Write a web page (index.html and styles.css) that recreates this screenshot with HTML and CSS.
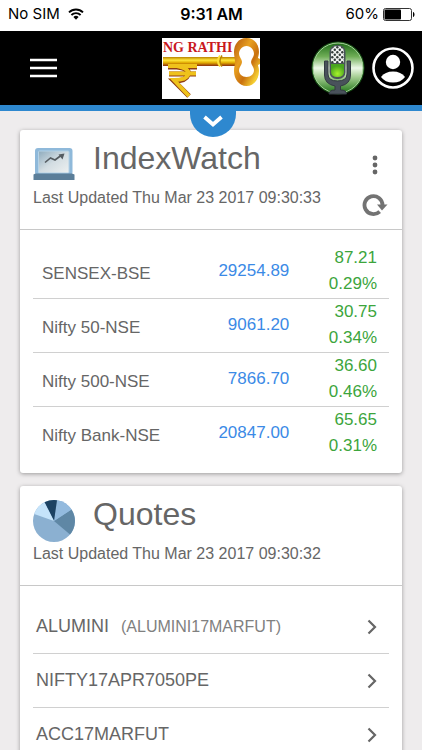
FILE: index.html
```html
<!DOCTYPE html>
<html lang="en">

<head>
  <meta charset="UTF-8" />
  <meta name="viewport" content="width=device-width, initial-scale=1.0" />
  <title>NG Rathi</title>
  <link rel="stylesheet" href="styles.css">
</head>

<body>
  <div class="status-bar">
    <div class="carrier">
      No SIM
      <svg width="16" height="12" viewBox="0 0 16 12">
        <path d="M1 4.4a10 10 0 0 1 14 0M3.4 7a6.6 6.6 0 0 1 9.2 0" fill="none" stroke="#000" stroke-width="1.9" />
        <path d="M5.4 9a3.8 3.8 0 0 1 5.2 0L8 11.8z" />
      </svg>
    </div>
    <div class="clock">9:31 AM</div>
    <div class="battery">
      60%
      <svg width="32" height="13" viewBox="0 0 32 13">
        <rect x=".5" y=".5" width="28" height="12" rx="2" fill="#fff" stroke="#333" />
        <rect x="1.5" y="1.5" width="16.5" height="10" rx="1" />
        <path d="M30 4c2 .6 2 4.400 0 5z" />
      </svg>
    </div>
  </div>

  <header class="header">
    <button class="icon-btn menu-btn" aria-label="Menu">
      <svg width="27" height="20" viewBox="0 0 27 20">
        <path d="M0 2h27M0 10h27M0 18h27" stroke="#fff" stroke-width="2.600" />
      </svg>
    </button>

    <a href="#" class="logo" aria-label="Home">
      <svg width="98" height="61" viewBox="0 0 98 61">
        <defs>
          <linearGradient id="bar" x1="0" y1="0" x2="0" y2="1">
            <stop offset="0" stop-color="#b98300" />
            <stop offset=".35" stop-color="#ffe83a" />
            <stop offset=".65" stop-color="#e0a800" />
            <stop offset="1" stop-color="#8a2b10" />
          </linearGradient>
          <linearGradient id="bow" x1="0" y1="0" x2="1" y2="1">
            <stop offset="0" stop-color="#b4570c" />
            <stop offset=".35" stop-color="#e8a020" />
            <stop offset=".6" stop-color="#c9700e" />
            <stop offset=".85" stop-color="#f7d233" />
            <stop offset="1" stop-color="#a04a10" />
          </linearGradient>
        </defs>
        <rect width="98" height="61" fill="#fff" />
        <path d="M1 19h75v9H1z" fill="url(#bar)" />
        <path d="M60 17.500q-4 5.500 0 11" fill="none" stroke="#b98300" stroke-width="1.500" />
        <path d="M58 17.500q-4 5.500 0 11" fill="none" stroke="#ffe23a" stroke-width="2" />
        <path fill="url(#bow)" fill-rule="evenodd" d="M84.500 0C93 0 97 7 97 14c0 3-1 5-1 6l2 1v5l-2 1c0 1 1 3 1 6 0 8-5 15-12.500 15S72 41 72 33c0-4 1-6 1-9s-1-6-1-10C72 7 76 0 84.500 0zm0 8c-4.500 0-7.500 4-7.500 8 0 3 3 5 3 8s-3 5-3 8c0 4 3 7 7.500 7s7.500-3 7.500-7c0-3-3-5-3-8s3-5 3-8c0-4-3-8-7.500-8z" />
        <path d="M6 29h29M7 36h27M15 29q14 2 11 8-2 6-14 6l15 15" fill="none" stroke="#8f3d14" stroke-width="5" />
        <path d="M6 28h29M7 35.500h27M15 28q14 3 11 9-2 5-14 5l15 16" fill="none" stroke="#efc21b" stroke-width="4" />
        <text x="1" y="14" class="logo-text">NG RATHI</text>
      </svg>
    </a>

    <div class="header-actions">
      <button class="icon-btn" aria-label="Voice search">
        <svg width="54" height="54" viewBox="0 0 54 54">
          <defs>
            <linearGradient id="green" x1="0" y1="0" x2="0" y2="1">
              <stop offset="0" stop-color="#1e6b18" />
              <stop offset=".27" stop-color="#6fae57" />
              <stop offset=".5" stop-color="#edf8e8" />
              <stop offset=".68" stop-color="#a5ce92" />
              <stop offset="1" stop-color="#207617" />
            </linearGradient>
            <radialGradient id="glow" cx=".5" cy=".75" r=".6">
              <stop offset="0" stop-color="#a7f32b" />
              <stop offset="1" stop-color="#4aa51f" />
            </radialGradient>
            <pattern id="mesh" width="5" height="5" patternUnits="userSpaceOnUse">
              <rect width="5" height="5" fill="#f1f3f1" />
              <circle cx="1.300" cy="1.300" r="1.200" fill="#333c3a" />
              <circle cx="3.800" cy="3.800" r="1.200" fill="#333c3a" />
            </pattern>
          </defs>
          <circle cx="27" cy="27" r="26.500" fill="#174f14" />
          <circle cx="27" cy="27" r="25" fill="url(#green)" stroke="#a7d39b" />
          <path d="M13.500 20h3.500v13q0 7 9.500 7t9.500-7V20h3.500v14q0 9-10 11v4q6 0 6 4H18q0-4 6-4v-4q-10.500-2-10.500-11z" fill="#49525b" stroke="#343b42" />
          <rect x="18.500" y="4" width="16" height="34" rx="7" fill="#4b555a" />
          <path d="M20 22V11q0-6 6.500-6t6.500 6v11z" fill="url(#mesh)" />
          <path d="M20 23h13v8q0 5-6.500 5t-6.500-5z" fill="url(#glow)" />
        </svg>
      </button>
      <button class="icon-btn" aria-label="Account">
        <svg width="42" height="42" viewBox="0 0 42 42">
          <circle cx="21" cy="21" r="19.500" fill="none" stroke="#fff" stroke-width="2.600" />
          <circle cx="21" cy="15" r="7.200" fill="#fff" />
          <path d="M9 30q4-5.500 12-5.500T33 30q-4 5.500-12 5.500T9 30z" fill="#fff" />
        </svg>
      </button>
    </div>

    <button class="pull-tab" aria-label="Show more">
      <svg width="20" height="13" viewBox="0 0 20 13">
        <path d="M1.500 2l8.500 7.500L18.500 2" fill="none" stroke="#fff" stroke-width="3.800" />
      </svg>
    </button>
  </header>

  <main class="container">
    <section class="card">
      <div class="card-header">
        <svg class="card-icon" width="42" height="34" viewBox="0 0 42 34">
          <defs>
            <linearGradient id="screen" x1="0" y1="0" x2="1" y2="1">
              <stop offset="0" stop-color="#8eabbd" />
              <stop offset=".5" stop-color="#d3dde2" />
              <stop offset="1" stop-color="#eef1f1" />
            </linearGradient>
          </defs>
          <rect x="2" y="1" width="37.500" height="27" rx="3" fill="#8fb9da" />
          <rect x="5.500" y="4" width="30.500" height="22" rx="1" fill="url(#screen)" stroke="#b5d3e7" />
          <path d="M2.500 26.500h36.500l2.500 1v5.500H.5v-5.500z" fill="#5b7e99" />
          <path d="M12 15.500l5.500-4.500 4.500 2 6-4.500" fill="none" stroke="#555c61" stroke-width="1.600" />
          <path d="M25.500 7.500l6-1-2 6z" fill="#555c61" />
        </svg>
        <h2>IndexWatch</h2>
        <p>Last Updated Thu Mar 23 2017 09:30:33</p>
        <div class="card-actions">
          <button class="icon-btn" aria-label="Options">
            <svg width="6" height="20" viewBox="0 0 6 20" fill="#666">
              <circle cx="3" cy="3" r="2.400" />
              <circle cx="3" cy="10" r="2.400" />
              <circle cx="3" cy="17" r="2.400" />
            </svg>
          </button>
          <button class="icon-btn" aria-label="Refresh">
            <svg width="26" height="24" viewBox="0 0 26 24">
              <path d="M17.700 18.600A9 9 0 1 1 20.500 12" fill="none" stroke="#737373" stroke-width="3.800" />
              <path d="M15 11.500h10.500L20 17.500z" fill="#737373" />
            </svg>
          </button>
        </div>
      </div>

      <table class="index-table">
        <tbody>
          <tr>
            <th scope="row">SENSEX-BSE</th>
            <td class="price">29254.89</td>
            <td class="change">87.21<br>0.29%</td>
          </tr>
          <tr>
            <th scope="row">Nifty 50-NSE</th>
            <td class="price">9061.20</td>
            <td class="change">30.75<br>0.34%</td>
          </tr>
          <tr>
            <th scope="row">Nifty 500-NSE</th>
            <td class="price">7866.70</td>
            <td class="change">36.60<br>0.46%</td>
          </tr>
          <tr>
            <th scope="row">Nifty Bank-NSE</th>
            <td class="price">20847.00</td>
            <td class="change">65.65<br>0.31%</td>
          </tr>
        </tbody>
      </table>
    </section>

    <section class="card">
      <div class="card-header">
        <svg class="card-icon" width="42" height="44" viewBox="0 0 42 44">
          <circle cx="21" cy="23" r="21" fill="#8bb0d1" />
          <path d="M21 23L38.500 11.500A21 21 0 0 1 37 36.500z" fill="#5f87a5" />
          <path d="M21 23L24 2.200A21 21 0 0 1 38.500 11.500z" fill="#93bade" />
          <path d="M21 23L11.500 4.300A21 21 0 0 1 24 2.200z" fill="#1c4263" />
          <path d="M21 23L1.200 16A21 21 0 0 1 11.500 4.300z" fill="#c5e3fa" />
        </svg>
        <h2>Quotes</h2>
        <p>Last Updated Thu Mar 23 2017 09:30:32</p>
      </div>

      <ul class="quote-list">
        <li>
          <a href="#">
            <span>ALUMINI</span>
            <small>(ALUMINI17MARFUT)</small>
            <svg class="chevron" width="10" height="16" viewBox="0 0 10 16">
              <path d="M1.500 1.500L8 8l-6.500 6.500" />
            </svg>
          </a>
        </li>
        <li>
          <a href="#">
            <span>NIFTY17APR7050PE</span>
            <svg class="chevron" width="10" height="16" viewBox="0 0 10 16">
              <path d="M1.500 1.500L8 8l-6.500 6.500" />
            </svg>
          </a>
        </li>
        <li>
          <a href="#">
            <span>ACC17MARFUT</span>
            <svg class="chevron" width="10" height="16" viewBox="0 0 10 16">
              <path d="M1.500 1.500L8 8l-6.500 6.500" />
            </svg>
          </a>
        </li>
      </ul>
    </section>
  </main>
</body>

</html>
```

FILE: styles.css
```css
* {
  box-sizing: border-box;
}

body {
  font-family: "Liberation Sans", Arial, sans-serif;
  margin: 0;
  height: 100vh;
  display: flex;
  flex-direction: column;
  overflow: hidden;
  background-color: #eeeced;
  color: #666;
}

svg {
  display: block;
}

/* phone status bar */
.status-bar {
  display: grid;
  grid-template-columns: 1fr auto 1fr;
  align-items: center;
  align-content: start;
  height: 31px;
  padding: 0 7px 0 8px;
  flex-shrink: 0;
  background-color: white;
  color: black;
  font-family: Inter, sans-serif;
  font-size: 15px;
  line-height: 28px;
}

.carrier,
.battery {
  display: flex;
  align-items: center;
  gap: 8px;
}

.battery {
  justify-content: flex-end;
  gap: 4px;
}

.clock {
  font-size: 16px;
  font-weight: 600;
}

/* header */
.header {
  position: relative;
  display: grid;
  grid-template-columns: 1fr auto 1fr;
  align-items: center;
  height: 80px;
  padding: 0 8px 0 30px;
  flex-shrink: 0;
  background-color: black;
  border-bottom: 6px solid #2e88cf;
}

.icon-btn {
  display: flex;
  justify-content: center;
  align-items: center;
  padding: 0;
  border: none;
  background: none;
  cursor: pointer;
}

.menu-btn {
  justify-self: start;
}

.logo {
  margin-right: 22px;
}

.logo-text {
  font-family: "Liberation Serif", serif;
  font-size: 14px;
  font-weight: bold;
  fill: #c9191e;
}

.header-actions {
  display: flex;
  justify-content: flex-end;
  align-items: center;
  gap: 7px;
}

.pull-tab {
  position: absolute;
  top: 74px;
  left: 50%;
  width: 46px;
  height: 32px;
  margin-left: -21px;
  padding: 10px 13px;
  border: none;
  border-radius: 0 0 23px 23px;
  background-color: #2e88cf;
  cursor: pointer;
}

/* cards */
.container {
  flex: 1;
  display: flex;
  flex-direction: column;
  gap: 13px;
  padding: 19px 20px;
  min-height: 0;
}

.card {
  flex-shrink: 0;
  padding-bottom: 13px;
  border-radius: 3px;
  background-color: white;
  box-shadow: 0 1px 4px rgba(0, 0, 0, 0.35);
}

.card-header {
  display: grid;
  grid-template-columns: 42px 1fr 28px;
  grid-template-rows: 48px 20px;
  column-gap: 18px;
  height: 100px;
  padding: 10px 13px;
  border-bottom: 1px solid #c8c8c8;
}

.card-icon {
  align-self: center;
}

.card-header h2 {
  margin: 0;
  font-size: 32px;
  font-weight: normal;
  line-height: 36px;
}

.card-header p {
  grid-column: 1 / 3;
  grid-row: 2;
  margin: 0;
  font-size: 16px;
  line-height: 20px;
}

.card-actions {
  grid-column: 3;
  grid-row: 1 / 3;
  padding-top: 5px;
}

.card-actions .icon-btn {
  width: 28px;
  height: 40px;
}

/* index rows */
.index-table {
  width: calc(100% - 26px);
  margin: 14px 13px 0;
  border-collapse: collapse;
  table-layout: fixed;
  font-size: 17px;
  line-height: 26px;
}

.index-table tr {
  height: 54px;
  border-bottom: 1px solid #d0d0d0;
}

.index-table tr:last-child {
  border-bottom: none;
}

.index-table th {
  width: 45%;
  padding: 6px 0 0 9px;
  font-weight: normal;
  text-align: left;
}

.index-table td {
  padding: 0;
  text-align: right;
}

.index-table .price {
  width: 27%;
  color: #3b8ae6;
}

.index-table .change {
  padding-right: 12px;
  color: #3ca53c;
}

/* quotes */
.quote-list {
  margin: 14px 13px 0;
  padding: 0;
  list-style: none;
}

.quote-list li {
  border-bottom: 1px solid #d0d0d0;
}

.quote-list a {
  display: flex;
  align-items: center;
  gap: 12px;
  height: 53px;
  padding: 0 12px 0 3px;
  color: #666;
  font-size: 18px;
  text-decoration: none;
}

.quote-list small {
  font-size: 16px;
  color: #808080;
}

.chevron {
  margin-left: auto;
  fill: none;
  stroke: #666;
  stroke-width: 2.2;
}
```
